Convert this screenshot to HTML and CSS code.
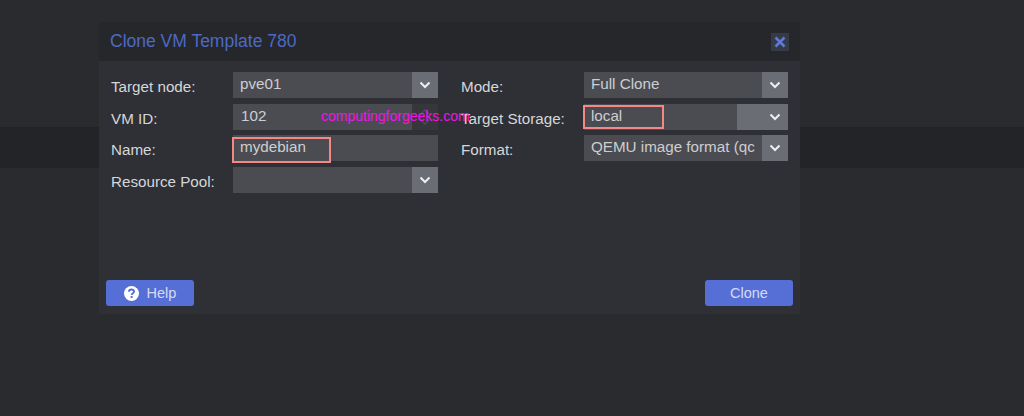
FILE: index.html
```html
<!DOCTYPE html>
<html lang="en">
<head>
<meta charset="utf-8">
<title>Clone VM Template 780</title>
<link rel="stylesheet" href="styles.css">
</head>
<body>
<div class="backdrop">
  <div class="band"></div>
</div>
<section class="dialog">
  <header class="dialog-head">
    <h1 class="dialog-title">Clone VM Template 780</h1>
    <button class="close" aria-label="Close">
      <svg width="12" height="12" viewBox="0 0 12 12"><path d="M1.5 1.5 10.5 10.5M10.5 1.5 1.5 10.5" fill="none" stroke="#5f7ad6" stroke-width="2.6"/></svg>
    </button>
  </header>
  <div class="dialog-body">
    <div class="form">
      <div class="col">
        <div class="row">
          <span class="label">Target node:</span>
          <div class="field"><span class="value">pve01</span><span class="arrow"><svg class="chev" viewBox="0 0 12 8"><path d="M1.5 1.5 6 6l4.500-4.500"/></svg></span></div>
        </div>
        <div class="row">
          <span class="label">VM ID:</span>
          <div class="field"><span class="value value-id">102</span><span class="arrow arrow-spin"><svg width="14" height="18" viewBox="0 0 14 18"><path d="M2 7 7 2l5 5M2 11l5 5 5-5" fill="none" stroke="#4a4b50" stroke-width="1.500"/></svg></span></div>
        </div>
        <div class="row">
          <span class="label">Name:</span>
          <div class="field"><span class="value value-name">mydebian</span><span class="mark mark-name"></span></div>
        </div>
        <div class="row">
          <span class="label">Resource Pool:</span>
          <div class="field"><span class="value"></span><span class="arrow"><svg class="chev" viewBox="0 0 12 8"><path d="M1.5 1.5 6 6l4.500-4.500"/></svg></span></div>
        </div>
      </div>
      <div class="col col-right">
        <div class="row">
          <span class="label">Mode:</span>
          <div class="field"><span class="value">Full Clone</span><span class="arrow"><svg class="chev" viewBox="0 0 12 8"><path d="M1.5 1.5 6 6l4.500-4.500"/></svg></span></div>
        </div>
        <div class="row">
          <span class="label">Target Storage:</span>
          <div class="field"><span class="value">local</span><span class="arrow arrow-wide"><svg class="chev" viewBox="0 0 12 8"><path d="M1.5 1.5 6 6l4.500-4.500"/></svg></span><span class="mark mark-local"></span></div>
        </div>
        <div class="row">
          <span class="label">Format:</span>
          <div class="field"><span class="value">QEMU image format (qc</span><span class="arrow"><svg class="chev" viewBox="0 0 12 8"><path d="M1.5 1.5 6 6l4.500-4.500"/></svg></span></div>
        </div>
      </div>
    </div>
    <footer class="actions">
      <button class="btn btn-help">
        <svg width="15" height="15" viewBox="0 0 15 15"><circle cx="7.500" cy="7.500" r="7.500" fill="#fff"/><path d="M5 5.800C5 4.300 6.200 3.500 7.500 3.500S10 4.300 10 5.600C10 7.200 7.900 7.200 7.700 9" fill="none" stroke="#566fd6" stroke-width="1.900"/><rect x="6.600" y="10" width="2" height="2" fill="#566fd6"/></svg>
        Help
      </button>
      <button class="btn btn-clone">Clone</button>
    </footer>
  </div>
</section>
<span class="watermark">computingforgeeks.com</span>
</body>
</html>
```
FILE: styles.css
```css
* { box-sizing: border-box; }
html, body { margin: 0; height: 100%; }
body {
  position: relative;
  width: 1024px;
  height: 416px;
  overflow: hidden;
  background: #2a2b2f;
  font-family: "Liberation Sans", Arial, sans-serif;
  font-size: 15.200px;
  color: #d6d7d9;
}
.backdrop { padding-top: 127px; }
.band { height: 41px; background: #232427; }
.dialog {
  position: absolute;
  left: 99px;
  top: 22px;
  width: 701px;
  height: 292px;
  display: flex;
  flex-direction: column;
  background: #2f3035;
}
.dialog-head {
  flex: none;
  height: 39px;
  display: flex;
  align-items: center;
  justify-content: space-between;
  padding: 0 11px;
  background: #25272a;
}
.dialog-title {
  margin: 0;
  font-size: 17.500px;
  font-weight: 400;
  color: #4e69c4;
}
.close {
  width: 18px;
  height: 18px;
  padding: 0;
  border: 0;
  display: flex;
  align-items: center;
  justify-content: center;
  background: #343a46;
}
.dialog-body {
  flex: 1;
  display: flex;
  flex-direction: column;
  justify-content: space-between;
  padding: 11px 7px 8px 7px;
}
.form { display: flex; gap: 23px; padding: 0 5px; }
.col { width: 327px; display: flex; flex-direction: column; gap: 5.670px; }
.row { display: flex; align-items: center; height: 26px; }
.label { width: 122px; flex: none; padding-top: 3px; }
.col-right .label { width: 123px; }
.field {
  position: relative;
  flex: 1;
  min-width: 0;
  height: 26px;
  display: flex;
  align-items: stretch;
  background: #4b4c52;
  color: #cdced1;
}
.value {
  flex: 1;
  min-width: 0;
  white-space: nowrap;
  padding: 3px 0 0 7px;
}
.value-id { padding-left: 8px; }
.arrow {
  flex: none;
  width: 26px;
  display: flex;
  align-items: center;
  justify-content: center;
  background: #6a6d73;
}
.arrow-spin { background: #36373b; }
.arrow-wide { width: 51px; padding-left: 25px; }
.chev { width: 12px; height: 8px; }
.chev path { fill: none; stroke: #eeeff0; stroke-width: 2; }
.mark { position: absolute; border: 2px solid #f58886; }
.mark-name { left: -1px; top: 2px; width: 99px; height: 26px; }
.mark-local { left: -1px; top: 1px; width: 81px; height: 24px; }
.actions { display: flex; justify-content: space-between; }
.btn {
  width: 88px;
  height: 26px;
  padding: 0;
  border: 0;
  border-radius: 3px;
  display: flex;
  align-items: center;
  justify-content: center;
  gap: 8px;
  background: #566fd6;
  color: #d5dbf3;
  font: inherit;
  font-size: 14.500px;
}
.watermark {
  position: absolute;
  left: 321px;
  top: 108px;
  font-size: 14px;
  color: #f312e8;
}
```
